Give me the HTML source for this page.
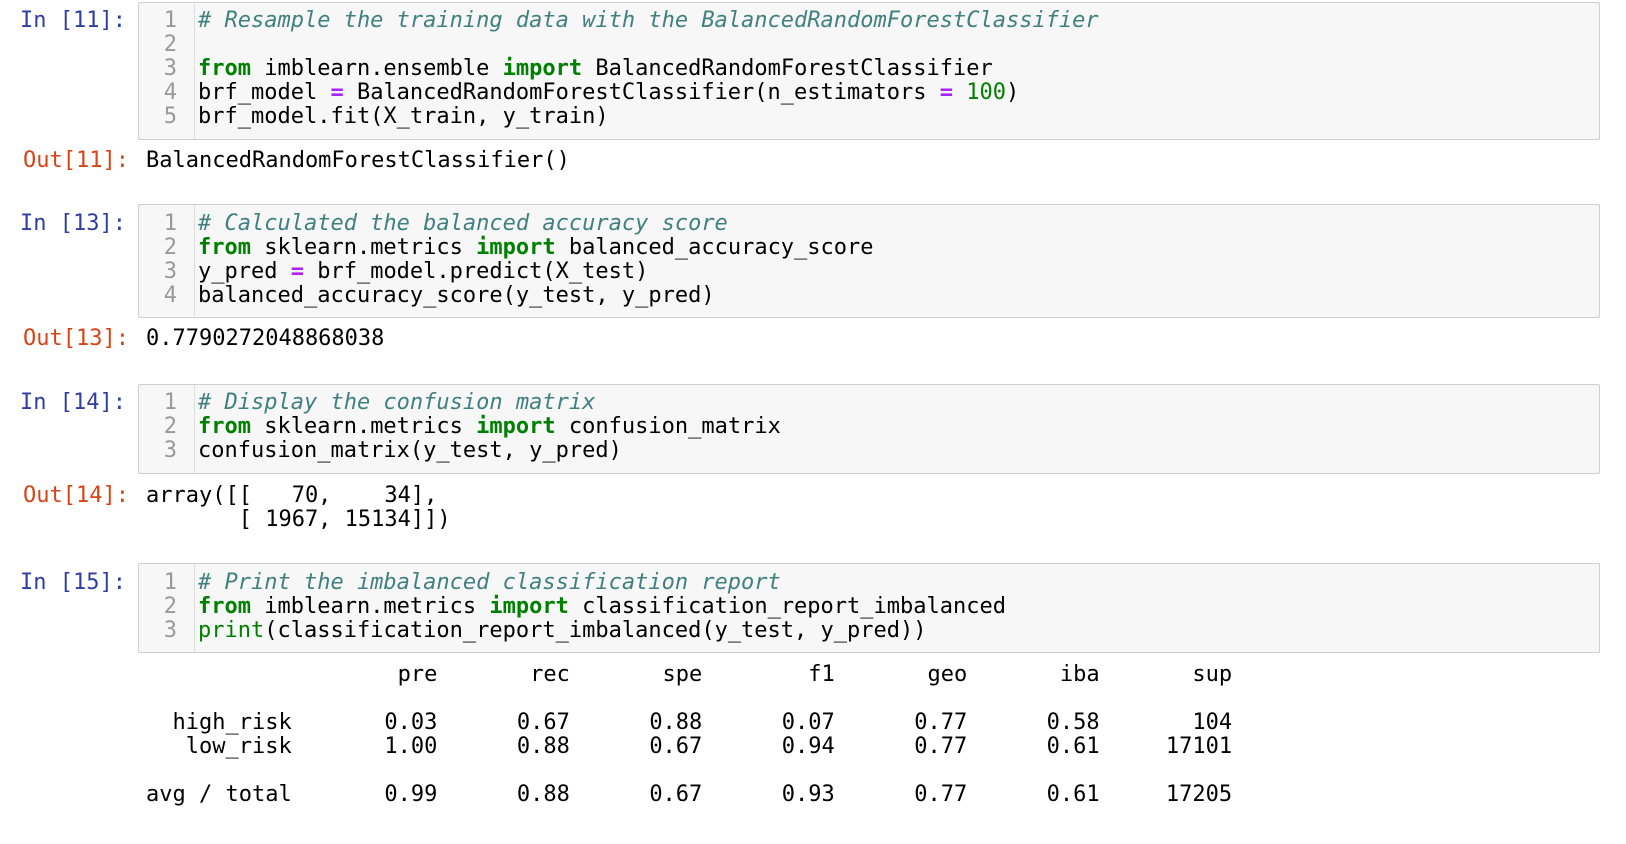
<!DOCTYPE html>
<html><head><meta charset="utf-8"><style>
body{margin:0;width:1626px;height:844px;background:#fff;position:relative;overflow:hidden;font-family:"DejaVu Sans Mono","Liberation Mono",monospace;font-size:22px;}
.l{position:absolute;white-space:pre;line-height:24px;height:24px;color:#000;}
.box{position:absolute;left:138px;width:1462px;background:#f7f7f7;border:1px solid #cfcfcf;border-radius:2px;box-sizing:border-box;}
.gut{position:absolute;left:0;top:0;bottom:0;width:55px;border-right:1px solid #ddd;}
.n{position:absolute;white-space:pre;line-height:24px;color:#999;left:150px;width:27px;text-align:right;}
.in{color:#303F9F;position:absolute;right:1500px;white-space:pre;line-height:24px;}
.out{color:#D84315;position:absolute;left:23px;white-space:pre;line-height:24px;}
.c{color:#408080;font-style:italic}
.k{color:#008000;font-weight:bold}
.o{color:#AA22FF;font-weight:bold}
.m{color:#008000}
.b{color:#008000}
</style></head><body>

<div class="box" style="top:2px;height:138px"><div class="gut"></div></div>
<div class="in" style="top:9px">In [11]:</div>
<div class="n" style="top:9px">1</div><div class="n" style="top:33px">2</div><div class="n" style="top:57px">3</div><div class="n" style="top:81px">4</div><div class="n" style="top:105px">5</div>
<div class="l" style="left:198px;top:9px"><span class="c"># Resample the training data with the BalancedRandomForestClassifier</span></div>
<div class="l" style="left:198px;top:57px"><span class="k">from</span> imblearn.ensemble <span class="k">import</span> BalancedRandomForestClassifier</div>
<div class="l" style="left:198px;top:81px">brf_model <span class="o">=</span> BalancedRandomForestClassifier(n_estimators <span class="o">=</span> <span class="m">100</span>)</div>
<div class="l" style="left:198px;top:105px">brf_model.fit(X_train, y_train)</div>
<div class="out" style="top:149px">Out[11]:</div>
<div class="l" style="left:146px;top:149px">BalancedRandomForestClassifier()</div>

<div class="box" style="top:204px;height:114px"><div class="gut"></div></div>
<div class="in" style="top:212px">In [13]:</div>
<div class="n" style="top:212px">1</div><div class="n" style="top:236px">2</div><div class="n" style="top:260px">3</div><div class="n" style="top:284px">4</div>
<div class="l" style="left:198px;top:212px"><span class="c"># Calculated the balanced accuracy score</span></div>
<div class="l" style="left:198px;top:236px"><span class="k">from</span> sklearn.metrics <span class="k">import</span> balanced_accuracy_score</div>
<div class="l" style="left:198px;top:260px">y_pred <span class="o">=</span> brf_model.predict(X_test)</div>
<div class="l" style="left:198px;top:284px">balanced_accuracy_score(y_test, y_pred)</div>
<div class="out" style="top:327px">Out[13]:</div>
<div class="l" style="left:146px;top:327px">0.7790272048868038</div>

<div class="box" style="top:384px;height:90px"><div class="gut"></div></div>
<div class="in" style="top:391px">In [14]:</div>
<div class="n" style="top:391px">1</div><div class="n" style="top:415px">2</div><div class="n" style="top:439px">3</div>
<div class="l" style="left:198px;top:391px"><span class="c"># Display the confusion matrix</span></div>
<div class="l" style="left:198px;top:415px"><span class="k">from</span> sklearn.metrics <span class="k">import</span> confusion_matrix</div>
<div class="l" style="left:198px;top:439px">confusion_matrix(y_test, y_pred)</div>
<div class="out" style="top:484px">Out[14]:</div>
<div class="l" style="left:146px;top:484px">array([[   70,    34],
       [ 1967, 15134]])</div>

<div class="box" style="top:563px;height:90px"><div class="gut"></div></div>
<div class="in" style="top:571px">In [15]:</div>
<div class="n" style="top:571px">1</div><div class="n" style="top:595px">2</div><div class="n" style="top:619px">3</div>
<div class="l" style="left:198px;top:571px"><span class="c"># Print the imbalanced classification report</span></div>
<div class="l" style="left:198px;top:595px"><span class="k">from</span> imblearn.metrics <span class="k">import</span> classification_report_imbalanced</div>
<div class="l" style="left:198px;top:619px"><span class="b">print</span>(classification_report_imbalanced(y_test, y_pred))</div>

<div class="l" style="left:146px;top:663px">                   pre       rec       spe        f1       geo       iba       sup</div>
<div class="l" style="left:146px;top:711px">  high_risk       0.03      0.67      0.88      0.07      0.77      0.58       104</div>
<div class="l" style="left:146px;top:735px">   low_risk       1.00      0.88      0.67      0.94      0.77      0.61     17101</div>
<div class="l" style="left:146px;top:783px">avg / total       0.99      0.88      0.67      0.93      0.77      0.61     17205</div>
</body></html>
